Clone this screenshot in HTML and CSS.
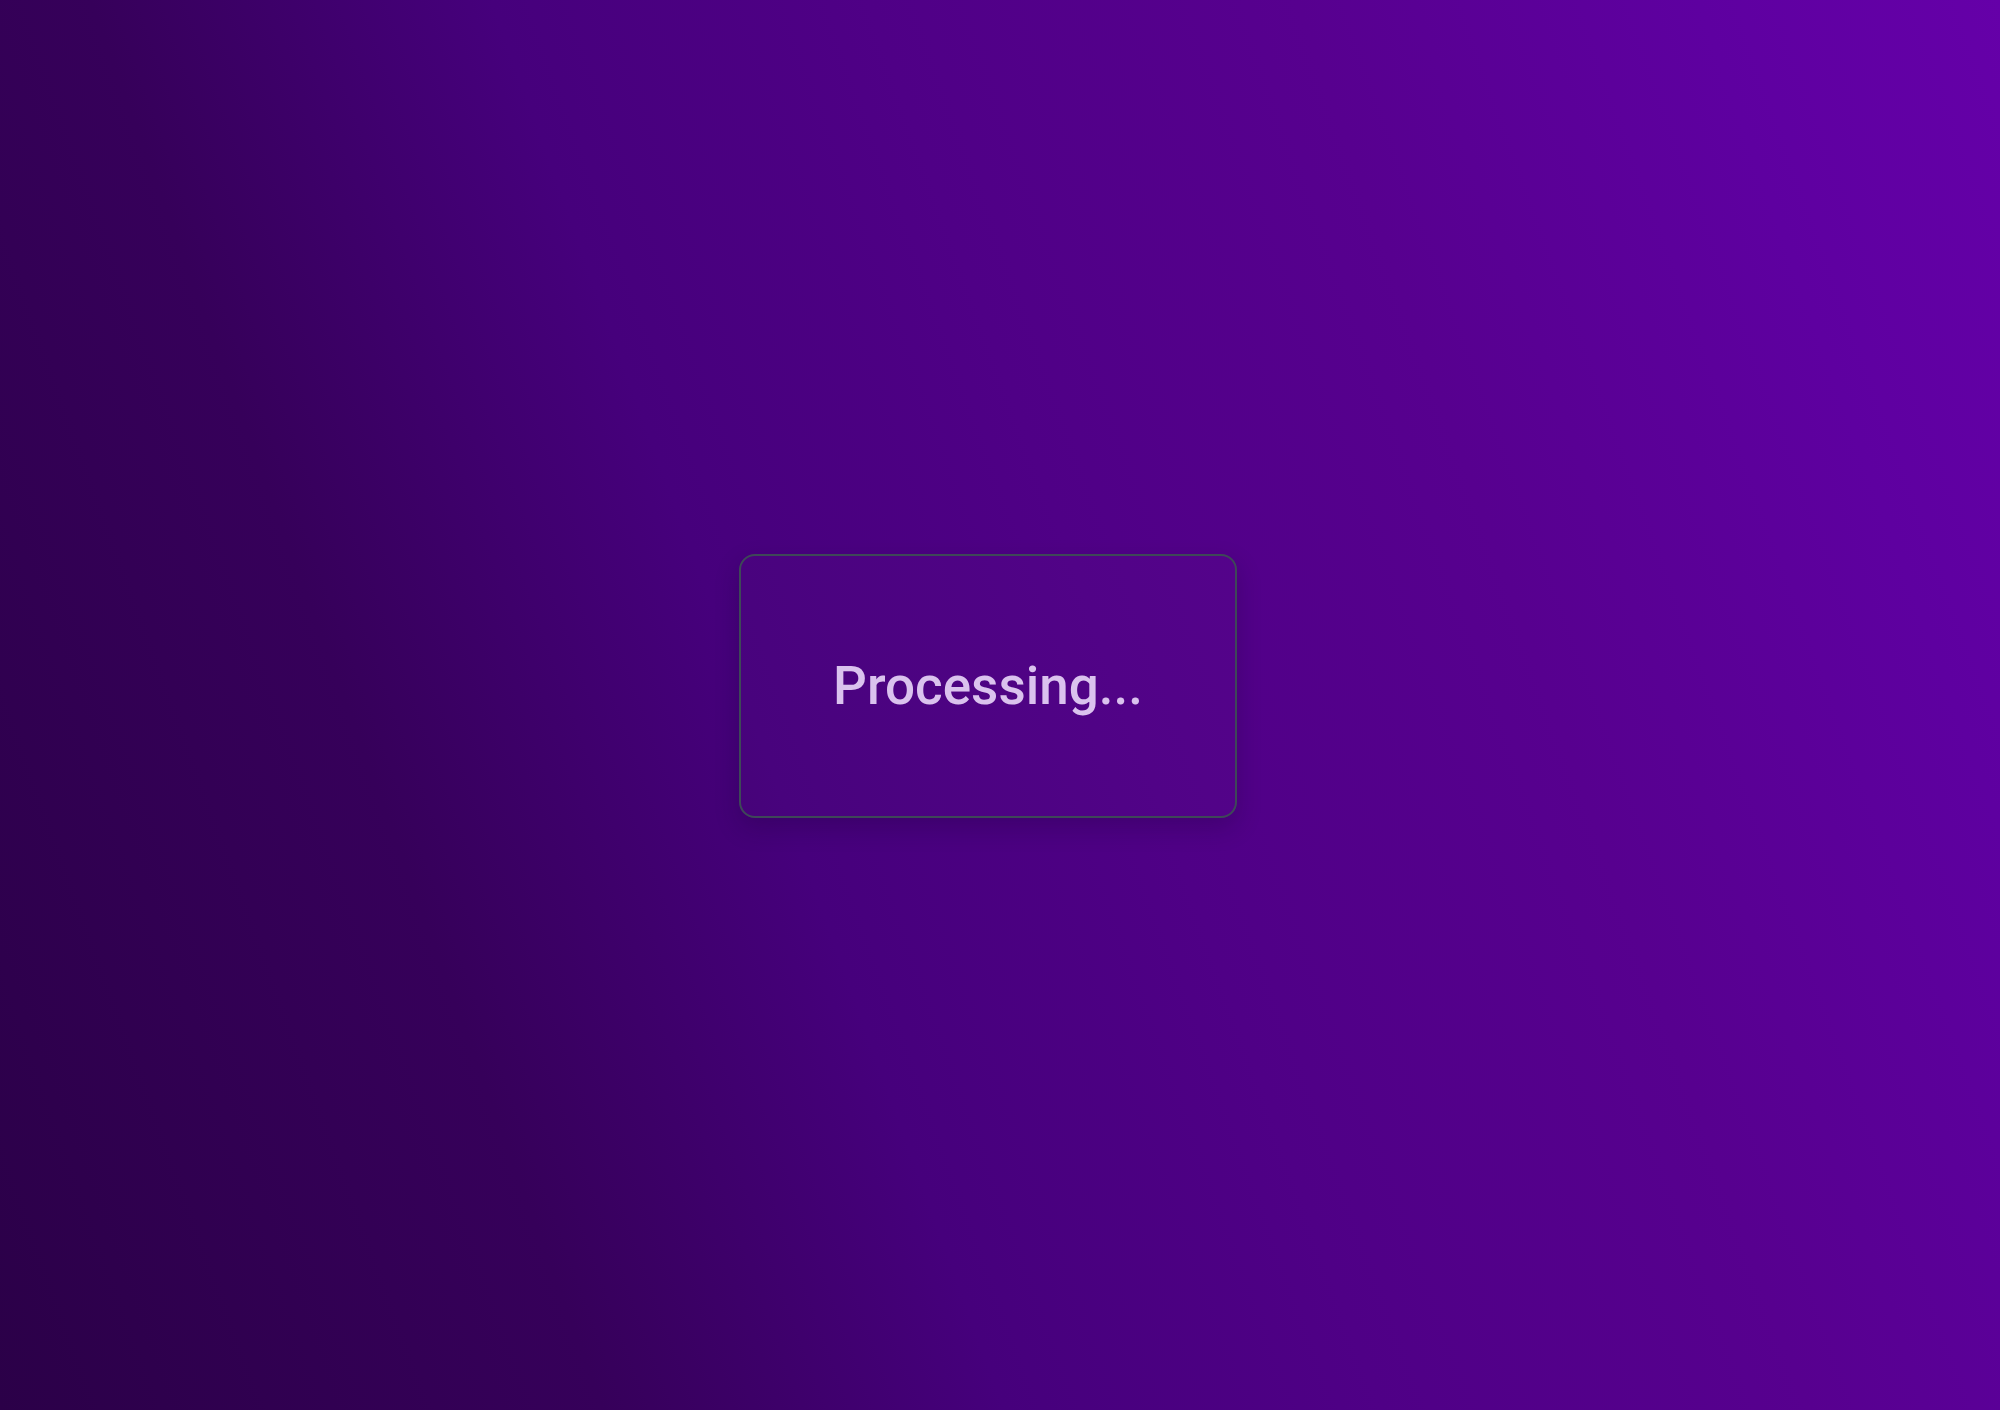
FILE: index.html
```html
<!DOCTYPE html>
<html lang="en">
<head>
<meta charset="utf-8">
<title>Processing</title>
<link rel="stylesheet" href="styles.css">
</head>
<body>
<main class="stage">
  <div class="status-card">
    <p class="status-text">Processing...</p>
  </div>
</main>
</body>
</html>
```

FILE: styles.css
```css
html, body {
  margin: 0;
  padding: 0;
  height: 100%;
}
body {
  font-family: Roboto, "Liberation Sans", sans-serif;
  background: linear-gradient(70deg, #2b0048 0%, #36005a 24%, #46007c 40%, #4f0086 55%, #57008f 72%, #5e00a0 88%, #6500a8 100%);
  overflow: hidden;
}
.stage {
  box-sizing: border-box;
  min-height: 100vh;
  padding: 0 24px 38px 0;
  display: flex;
  align-items: center;
  justify-content: center;
}
.status-card {
  box-sizing: border-box;
  width: 498px;
  height: 264px;
  border: 2px solid #3e4858;
  border-radius: 16px;
  background: rgba(255, 255, 255, 0.01);
  box-shadow: 0 10px 24px rgba(20, 0, 40, 0.22);
  display: flex;
  align-items: center;
  justify-content: center;
}
.status-text {
  margin: 0;
  font-size: 53px;
  font-weight: 500;
  color: #dac2ee;
  line-height: 1;
}
```
